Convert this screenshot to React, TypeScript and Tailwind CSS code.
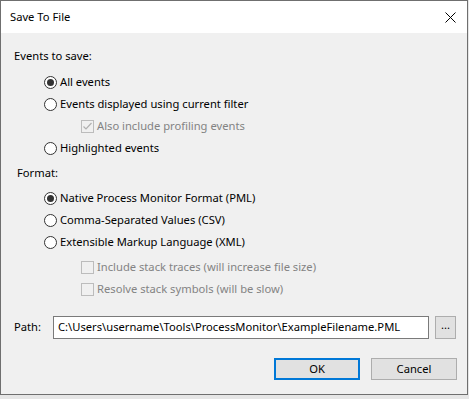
import React from 'react';

const font = { fontFamily: '"Noto Sans", "Liberation Sans", sans-serif' };

function Radio({ checked, label }: { checked?: boolean; label: string }) {
  return (
    <div className="h-[22px] flex items-center pl-[43px]">
      <span className="w-[13px] h-[13px] rounded-full border border-[#333333] bg-white flex items-center justify-center">
        {checked && <span className="w-[7px] h-[7px] rounded-full bg-[#333333]" />}
      </span>
      <span className="ml-[3px] text-[11.2px] text-black">{label}</span>
    </div>
  );
}

function Check({ checked, label }: { checked?: boolean; label: string }) {
  return (
    <div className="h-[22px] flex items-center pl-[80px]">
      <span className="w-[13px] h-[13px] border border-[#bcbcbc] bg-[#f0f0f0] flex items-center justify-center">
        {checked && (
          <svg width="11" height="11" viewBox="0 0 11 11">
            <path d="M1.5 5.5 L4 8 L9.5 2" fill="none" stroke="#b0b0b0" strokeWidth="1.2" />
          </svg>
        )}
      </span>
      <span className="ml-[3px] text-[11.2px] text-[#838383]">{label}</span>
    </div>
  );
}

export default function App() {
  return (
    <div className="w-[469px] h-[399px] bg-[#e6e6e6] overflow-hidden" style={font}>
      <div className="w-[468px] h-[395px] border border-[#6f6f6f] bg-[#f0f0f0] flex flex-col">
        <div className="h-[32px] bg-white flex items-center justify-between pl-[9px] pr-[11px]">
          <span className="text-[11.2px] text-black">Save To File</span>
          <svg width="11" height="11" viewBox="0 0 11 11">
            <path d="M0.5 0.5 L10.5 10.5 M10.5 0.5 L0.5 10.5" stroke="#000" strokeWidth="1" />
          </svg>
        </div>

        <div className="flex flex-col pt-[15px]">
          <div className="h-[16px] flex items-center pl-[13px] text-[11.2px] text-black">Events to save:</div>
          <div className="mt-[7px] flex flex-col">
            <Radio checked label="All events" />
            <Radio label="Events displayed using current filter" />
            <Check checked label="Also include profiling events" />
            <Radio label="Highlighted events" />
          </div>

          <div className="mt-[6px] h-[16px] flex items-center pl-[16px] text-[11.2px] text-black">Format:</div>
          <div className="mt-[6px] flex flex-col">
            <Radio checked label="Native Process Monitor Format (PML)" />
            <Radio label="Comma-Separated Values (CSV)" />
            <Radio label="Extensible Markup Language (XML)" />
          </div>
          <div className="mt-[3px] flex flex-col">
            <Check label="Include stack traces (will increase file size)" />
            <Check label="Resolve stack symbols (will be slow)" />
          </div>

          <div className="mt-[16px] flex items-center h-[23px] pl-[13px]">
            <span className="w-[39px] text-[11.2px] text-black">Path:</span>
            <div className="w-[376px] h-[23px] border border-[#7a7a7a] bg-white flex items-center pl-[4px] text-[11.2px] text-black">
              C:\Users\username\Tools\ProcessMonitor\ExampleFilename.PML
            </div>
            <div className="ml-[6px] w-[21px] h-[23px] border border-[#adadad] bg-[#e1e1e1] flex items-center justify-center text-[11.2px] text-black pb-[4px]">
              ...
            </div>
          </div>

          <div className="mt-[19px] flex justify-end gap-[11px] pr-[10px]">
            <button className="w-[86px] h-[22px] border-2 border-[#0078d7] bg-[#e1e1e1] text-[11.2px] text-black">OK</button>
            <button className="w-[86px] h-[22px] border border-[#adadad] bg-[#e1e1e1] text-[11.2px] text-black">Cancel</button>
          </div>
        </div>
      </div>
    </div>
  );
}
